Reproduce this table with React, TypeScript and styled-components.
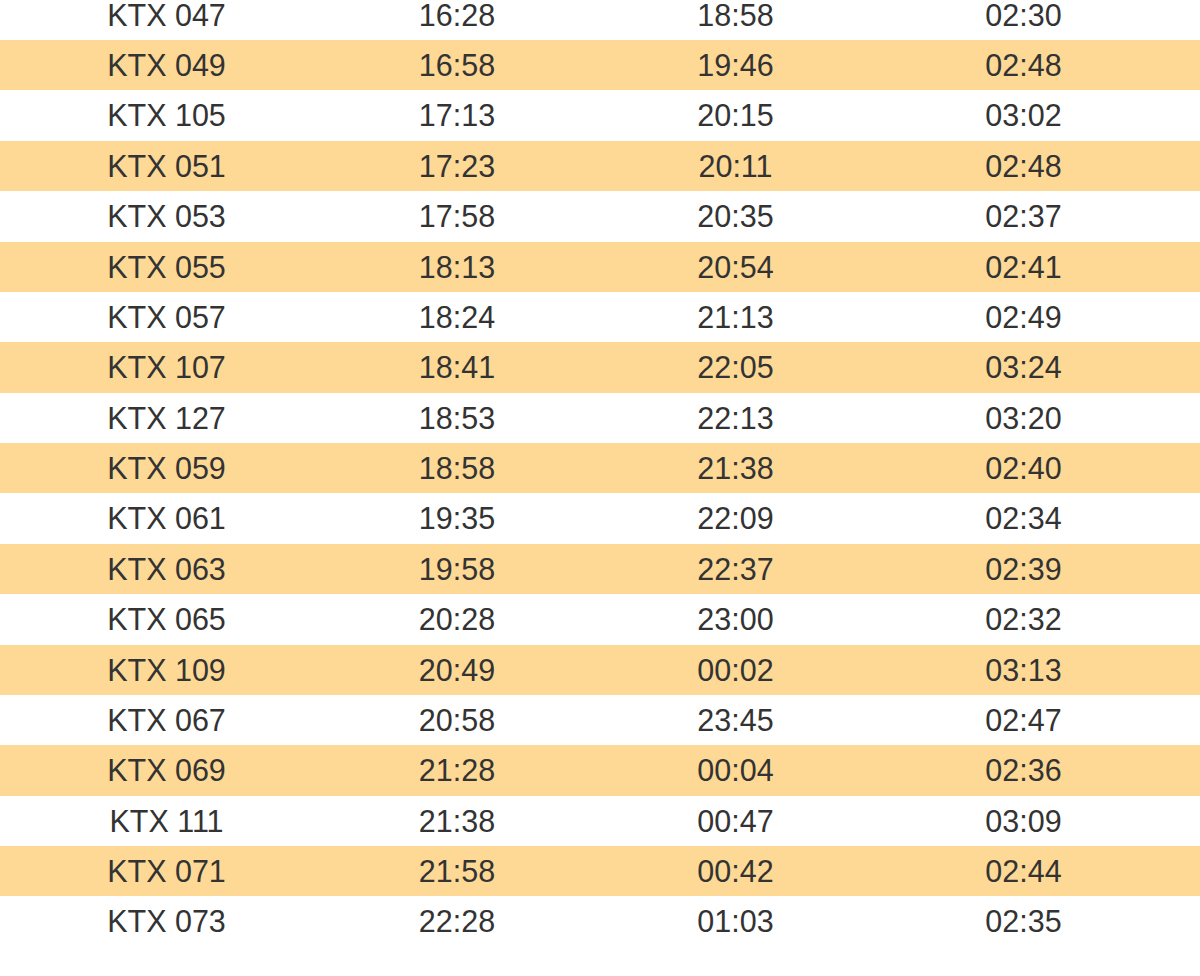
import React from 'react';
import styled, { createGlobalStyle } from 'styled-components';

const GlobalStyle = createGlobalStyle`
  html, body {
    margin: 0;
    padding: 0;
    background: #ffffff;
  }
  body {
    font-family: "Liberation Sans", Arial, sans-serif;
    overflow: hidden;
  }
`;

const Page = styled.div`
  width: 1200px;
  height: 976px;
  overflow: hidden;
  background: #ffffff;
`;

const Table = styled.div`
  display: flex;
  flex-direction: column;
  margin-top: -10.3px;
`;

const Row = styled.div<{ $striped: boolean }>`
  display: grid;
  grid-template-columns: 333px 248px 309px 267px;
  align-items: center;
  height: 50.375px;
  background: ${(p) => (p.$striped ? '#fdd995' : '#ffffff')};
`;

const Cell = styled.div`
  text-align: center;
  font-size: 30.5px;
  color: #333333;
  line-height: 1;
  white-space: nowrap;
`;

type Train = [string, string, string, string];

const trains: Train[] = [
  ['KTX 047', '16:28', '18:58', '02:30'],
  ['KTX 049', '16:58', '19:46', '02:48'],
  ['KTX 105', '17:13', '20:15', '03:02'],
  ['KTX 051', '17:23', '20:11', '02:48'],
  ['KTX 053', '17:58', '20:35', '02:37'],
  ['KTX 055', '18:13', '20:54', '02:41'],
  ['KTX 057', '18:24', '21:13', '02:49'],
  ['KTX 107', '18:41', '22:05', '03:24'],
  ['KTX 127', '18:53', '22:13', '03:20'],
  ['KTX 059', '18:58', '21:38', '02:40'],
  ['KTX 061', '19:35', '22:09', '02:34'],
  ['KTX 063', '19:58', '22:37', '02:39'],
  ['KTX 065', '20:28', '23:00', '02:32'],
  ['KTX 109', '20:49', '00:02', '03:13'],
  ['KTX 067', '20:58', '23:45', '02:47'],
  ['KTX 069', '21:28', '00:04', '02:36'],
  ['KTX 111', '21:38', '00:47', '03:09'],
  ['KTX 071', '21:58', '00:42', '02:44'],
  ['KTX 073', '22:28', '01:03', '02:35'],
];

const App: React.FC = () => {
  return (
    <Page>
      <GlobalStyle />
      <Table>
        {trains.map((t, i) => (
          <Row key={t[0]} $striped={i % 2 === 1}>
            {t.map((v, j) => (
              <Cell key={j}>{v}</Cell>
            ))}
          </Row>
        ))}
      </Table>
    </Page>
  );
};

export default App;
